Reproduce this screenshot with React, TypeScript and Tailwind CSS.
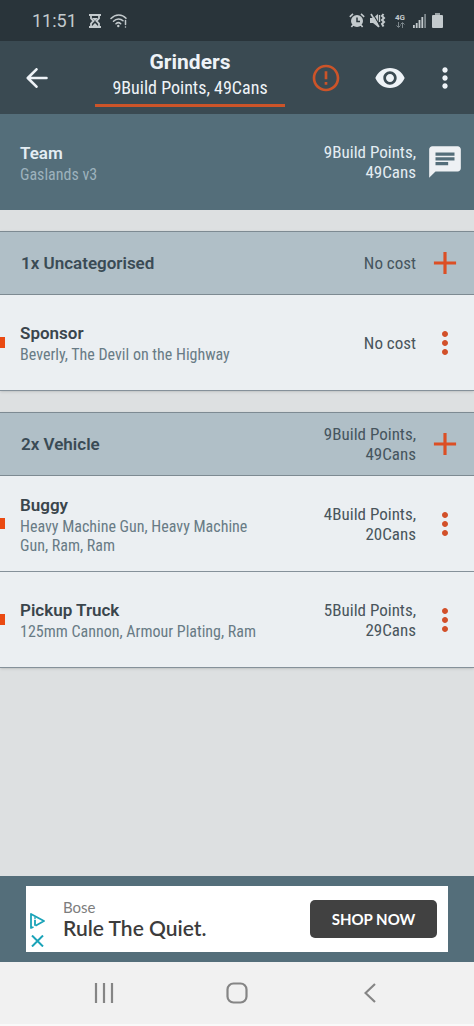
import {
  MdAdd,
  MdChat,
  MdErrorOutline,
  MdMoreVert,
  MdVisibility,
} from "react-icons/md";

type Item = { name: string; detail: string; cost: string[] };
type Category = { title: string; cost: string[]; items: Item[] };

const categories: Category[] = [
  {
    title: "1x Uncategorised",
    cost: ["No cost"],
    items: [
      {
        name: "Sponsor",
        detail: "Beverly, The Devil on the Highway",
        cost: ["No cost"],
      },
    ],
  },
  {
    title: "2x Vehicle",
    cost: ["9Build Points,", "49Cans"],
    items: [
      {
        name: "Buggy",
        detail: "Heavy Machine Gun, Heavy Machine Gun, Ram, Ram",
        cost: ["4Build Points,", "20Cans"],
      },
      {
        name: "Pickup Truck",
        detail: "125mm Cannon, Armour Plating, Ram",
        cost: ["5Build Points,", "29Cans"],
      },
    ],
  },
];

function Cost({ lines }: { lines: string[] }) {
  return (
    <p className="shrink-0 text-right font-['Roboto_Condensed',Roboto,sans-serif] text-[17px] leading-5">
      {lines.map((line) => (
        <span key={line} className="block">
          {line}
        </span>
      ))}
    </p>
  );
}

function StatusBar() {
  return (
    <div className="flex h-[41px] items-center bg-[#29343a] pl-8 pr-[31px] text-[#c3cacd]">
      <span className="text-[18px] leading-6">11:51</span>

      {/* Hourglass */}
      <svg className="ml-3 h-[14px] w-3" viewBox="0 0 12 14" fill="none" stroke="currentColor">
        <path d="M0 1h12M0 13h12" strokeWidth="2" />
        <path d="M2 2v2.500L4.500 7 2 9.500V12M10 2v2.500L7.500 7 10 9.500V12" strokeWidth="1.800" />
        <path d="M3 4h6L6 7zM3 12l3-3 3 3z" fill="currentColor" stroke="none" />
      </svg>

      {/* Wifi with alert */}
      <svg className="ml-[9px] h-[14px] w-[18px]" viewBox="0 0 18 14" fill="none" stroke="currentColor" strokeWidth="1.500" strokeLinecap="round">
        <path d="M1 4.500C5.500-.2 12-.2 16 4.200M3.500 7.200c3-3 7-3 9.500-.4M6 9.800c1.500-1.400 3.300-1.400 4.700 0" />
        <circle cx="8.300" cy="12" r="1.200" fill="currentColor" stroke="none" />
        <path d="M15.500 6.500v4M15.500 12.900v.1" />
      </svg>

      <div className="ml-auto flex items-center">
        {/* Alarm */}
        <svg className="h-[15px] w-4" viewBox="0 0 16 15" fill="none" stroke="currentColor">
          <circle cx="8" cy="8" r="6" fill="currentColor" stroke="none" />
          <path d="M.8 3.800L4 .9M15.200 3.800L12 .9" strokeWidth="1.600" />
          <path d="M4 12l-1.600 2M12 12l1.600 2" strokeWidth="1.600" />
          <path d="M8 4.500v4h3" stroke="#29343a" strokeWidth="1.500" />
        </svg>

        {/* Muted, vibrating */}
        <svg className="ml-[5px] h-[15px] w-4" viewBox="0 0 16 15" fill="none" stroke="currentColor">
          <path d="M0 5h3l5-4v13l-5-4H0z" fill="currentColor" stroke="none" />
          <path d="M2.500 0l8 14" stroke="#29343a" strokeWidth="1.200" />
          <path d="M1 1l8 13" strokeWidth="1.600" />
          <path d="M9.500 2v7" strokeWidth="1.400" />
          <path d="M13.500 1l-1.500 2 2 2-2 2 2 2-2 2 1.500 2.500" strokeWidth="2" />
        </svg>

        {/* 4G data */}
        <span className="ml-[9px] flex w-[10px] flex-col items-center">
          <span className="text-[8px] font-bold leading-[9px]">4G</span>
          <svg className="h-[6px] w-[9px]" viewBox="0 0 9 6" fill="none" stroke="#7d878c">
            <path d="M2.500 0v5M.5 3.500l2 2 2-2M6.500 6V1M4.500 2.500l2-2 2 2" />
          </svg>
        </span>

        {/* Signal */}
        <svg className="ml-2 h-[14px] w-[13px]" viewBox="0 0 13 14" fill="currentColor">
          <path d="M0 11h1.800v3H0zM2.800 9h1.800v5H2.800zM5.600 6h1.800v8H5.600zM8.400 3h1.800v11H8.400z" />
          <path d="M11.200 0H13v14h-1.800z" fill="#7d878c" />
        </svg>

        {/* Battery */}
        <svg className="ml-[6px] h-[15px] w-[11px]" viewBox="0 0 11 15" fill="currentColor">
          <path d="M3 0h5v2H3z" fill="#9aa3a7" />
          <path d="M1 2h9q1 0 1 1v11q0 1-1 1H1q-1 0-1-1V3q0-1 1-1z" />
        </svg>
      </div>
    </div>
  );
}

function Header() {
  return (
    <header className="flex h-[73px] items-center bg-[#3a4a52] pr-[6px] text-[#eef3f7]">
      <button type="button" aria-label="Back" className="flex h-12 w-[74px] items-center justify-center">
        <svg className="h-5 w-[22px]" viewBox="0 0 22 20" fill="none" stroke="currentColor" strokeWidth="2.600" strokeLinecap="round" strokeLinejoin="round">
          <path d="M20.500 10H2M10.500 1.300L1.800 10l8.700 8.700" />
        </svg>
      </button>

      <div className="mx-[9px] flex h-full min-w-0 flex-1 flex-col justify-end pb-[7px] pl-3 text-center">
        <h1 className="text-[21px] font-bold leading-6">Grinders</h1>
        <p className="border-b-3 border-[#cc5429] pb-[2px] font-['Roboto_Condensed',Roboto,sans-serif] text-[18px] leading-7 whitespace-nowrap">
          9Build Points, 49Cans
        </p>
      </div>

      <button type="button" aria-label="Warnings" className="flex h-12 w-16 items-center justify-center">
        <MdErrorOutline className="size-8 text-[#cc5429]" />
      </button>
      <button type="button" aria-label="Preview" className="flex h-12 w-16 items-center justify-center">
        <MdVisibility className="size-8" />
      </button>
      <button type="button" aria-label="More options" className="flex h-12 w-[46px] items-center justify-center">
        <MdMoreVert className="size-8" />
      </button>
    </header>
  );
}

function ItemRow({ item }: { item: Item }) {
  return (
    <li className="flex min-h-24 items-center border-b border-[#85919a] bg-[#ebeff2] pr-[10px]">
      <span className="h-[11px] w-[5px] shrink-0 bg-[#ea4a12]" />
      <div className="min-w-0 flex-1 pl-[15px] pr-12">
        <h3 className="text-[17px] font-semibold leading-6 text-[#3a454c]">{item.name}</h3>
        <p className="font-['Roboto_Condensed',Roboto,sans-serif] text-[16px] leading-[19px] text-[#687b85]">
          {item.detail}
        </p>
      </div>
      <div className="text-[#49555c]">
        <Cost lines={item.cost} />
      </div>
      <button type="button" aria-label={`${item.name} options`} className="ml-[10px] flex size-[38px] items-center justify-center text-[#d2502a]">
        <MdMoreVert className="size-9" />
      </button>
    </li>
  );
}

function CategorySection({ category }: { category: Category }) {
  return (
    <section className="mt-[21px] shadow-sm">
      <div className="flex h-16 items-center border-y border-[#7d8a92] bg-[#b0bfc7] pl-[21px] pr-[10px] text-[#46555e]">
        <h2 className="flex-1 text-[17px] font-semibold leading-6 text-[#3a4b55]">{category.title}</h2>
        <Cost lines={category.cost} />
        <button type="button" aria-label={`Add to ${category.title}`} className="ml-[10px] flex size-[38px] items-center justify-center text-[#dc4f25]">
          <MdAdd className="size-[38px]" />
        </button>
      </div>
      <ul>
        {category.items.map((item) => (
          <ItemRow key={item.name} item={item} />
        ))}
      </ul>
    </section>
  );
}

function AdBanner() {
  return (
    <aside className="bg-[#546e7a] px-[26px] py-[10px]">
      <div className="flex h-[66px] items-center bg-white pl-1 pr-[11px]">
        <div className="flex flex-col gap-[6px] self-end pb-[5px] text-[#1aa3b8]">
          <a href="#adchoices" aria-label="AdChoices">
            <svg className="h-4 w-[15px]" viewBox="0 0 15 16" fill="none" stroke="currentColor" strokeWidth="1.800" strokeLinejoin="round">
              <path d="M3.500 14L1 15V1l13 7-8.500 4.700" />
              <path d="M5 6.800v6M5 4.300v1.500" strokeWidth="1.800" />
            </svg>
          </a>
          <button type="button" aria-label="Close ad">
            <svg className="ml-px h-3 w-[13px]" viewBox="0 0 13 12" stroke="currentColor" strokeWidth="2">
              <path d="M1 .5l11 11M12 .5l-11 11" />
            </svg>
          </button>
        </div>
        <div className="ml-[18px] min-w-0 flex-1 font-[Lato,sans-serif]">
          <p className="text-[15px] leading-[18px] text-[#7d7d7d]">Bose</p>
          <p className="text-[21px] font-semibold leading-6 text-[#3c3c3c]">Rule The Quiet.</p>
        </div>
        <button type="button" className="h-[38px] w-[127px] rounded-[5px] bg-[#414141] font-[Lato,sans-serif] text-[15px] font-bold text-white">
          SHOP NOW
        </button>
      </div>
    </aside>
  );
}

function NavBar() {
  return (
    <nav className="flex h-16 items-center justify-around border-b-2 border-[#f9f9f9] bg-[#f1f1f1] px-[38px] text-[#858585]">
      <button type="button" aria-label="Recent apps" className="flex w-[133px] justify-center">
        <svg className="h-5 w-5" viewBox="0 0 20 20" stroke="currentColor" strokeWidth="2.200">
          <path d="M2 0v20M10 0v20M18 0v20" />
        </svg>
      </button>
      <button type="button" aria-label="Home" className="flex w-[133px] justify-center">
        <svg className="h-[22px] w-[22px]" viewBox="0 0 22 22" fill="none" stroke="currentColor" strokeWidth="2.200">
          <rect x="1.500" y="1.500" width="19" height="19" rx="6" />
        </svg>
      </button>
      <button type="button" aria-label="Back" className="flex w-[133px] justify-center">
        <svg className="h-5 w-3" viewBox="0 0 12 20" fill="none" stroke="currentColor" strokeWidth="2.200">
          <path d="M11 1L1.500 10l9.500 9" />
        </svg>
      </button>
    </nav>
  );
}

export default function App() {
  return (
    <div className="flex min-h-screen flex-col bg-[#dde0e1] font-[Roboto,sans-serif]">
      <StatusBar />
      <Header />

      <main className="flex-1">
        {/* Team summary */}
        <section className="flex h-24 items-center bg-[#546e7a] pl-5 pr-[10px] text-[#e4edf3]">
          <div className="flex-1">
            <h2 className="text-[17px] font-semibold leading-6">Team</h2>
            <p className="font-['Roboto_Condensed',Roboto,sans-serif] text-[16px] leading-[19px] text-[#9db2bd]">
              Gaslands v3
            </p>
          </div>
          <Cost lines={["9Build Points,", "49Cans"]} />
          <button type="button" aria-label="Notes" className="ml-[10px]">
            <MdChat className="size-[38px] text-[#eef1f4]" />
          </button>
        </section>

        {categories.map((category) => (
          <CategorySection key={category.title} category={category} />
        ))}
      </main>

      <AdBanner />
      <NavBar />
    </div>
  );
}
